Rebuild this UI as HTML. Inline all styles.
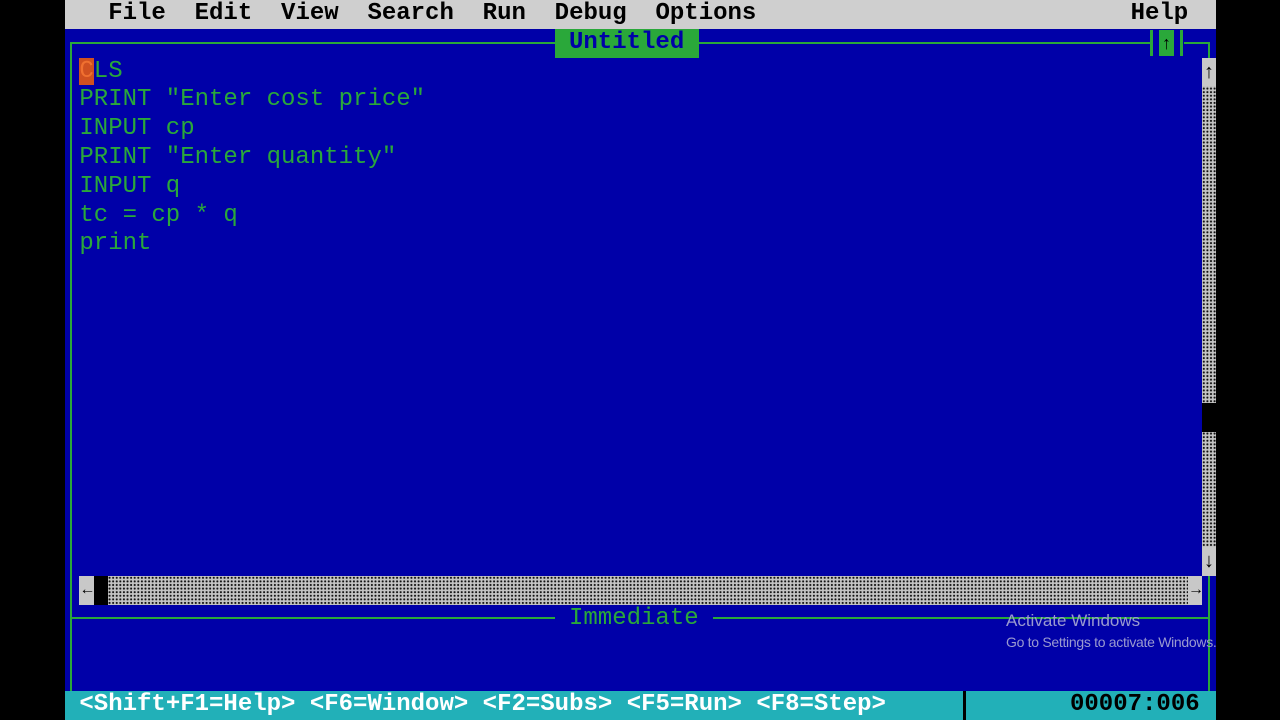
<!DOCTYPE html>
<html><head><meta charset="utf-8"><style>
*{margin:0;padding:0;box-sizing:border-box}
html,body{width:1280px;height:720px;overflow:hidden;background:#000}
.s{position:absolute;left:65px;top:0;width:1151px;height:720px;background:#0000a8;overflow:hidden}
.t{position:absolute;font-family:"Liberation Mono",monospace;font-size:24px;line-height:28.8px;white-space:pre;height:28.8px}
.g{color:#2aa83a}
.dot{background-color:#c4c4c4;background-image:radial-gradient(circle,#111 0.9px,transparent 1.2px);background-size:3.6px 3.6px}
.lg{background:#c8c8c8;color:#000;text-align:center}
</style></head><body>
<div class="s">
 <div style="position:absolute;left:0;top:0;width:1151px;height:28.8px;background:#cfcfcf"></div>
 <div class="t" style="left:0;top:0;color:#000;font-weight:bold">   File  Edit  View  Search  Run  Debug  Options</div>
 <div class="t" style="left:1065.6px;top:0;color:#000;font-weight:bold">Help</div>
 <!-- frame -->
 <div style="position:absolute;left:5px;top:42px;width:1140px;height:2px;background:#2aa83a"></div>
 <div style="position:absolute;left:5px;top:42px;width:2px;height:650px;background:#2aa83a"></div>
 <div style="position:absolute;left:1143px;top:42px;width:2px;height:650px;background:#2aa83a"></div>
 <div style="position:absolute;left:7px;top:617px;width:1136px;height:2px;background:#2aa83a"></div>
 <!-- title -->
 <div class="t" style="left:489.6px;top:28.8px;background:#2aa83a;color:#0000a8;font-weight:bold"> Untitled </div>
 <!-- up box -->
 <div style="position:absolute;left:1085px;top:30px;width:34px;height:28px;background:#0000a8"></div>
 <div style="position:absolute;left:1085px;top:30px;width:3px;height:26px;background:#2aa83a"></div>
 <div style="position:absolute;left:1094px;top:30px;width:15px;height:26px;background:#2aa83a;color:#000;font:bold 18px 'Liberation Sans';text-align:center;line-height:26px">↑</div>
 <div style="position:absolute;left:1115px;top:30px;width:3px;height:26px;background:#2aa83a"></div>
 <!-- code -->
 <div class="t g" style="left:14.4px;top:57.6px"><span style="background:#d05020;color:#f07030">C</span>LS
PRINT "Enter cost price"
INPUT cp
PRINT "Enter quantity"
INPUT q
tc = cp * q
print</div>
 <!-- vertical scrollbar -->
 <div class="dot" style="position:absolute;left:1137px;top:57.6px;width:14px;height:518px"></div>
 <div class="lg" style="position:absolute;left:1137px;top:57.6px;width:14px;height:28.8px;font:bold 20px 'Liberation Sans';line-height:28px">↑</div>
 <div style="position:absolute;left:1137px;top:403px;width:14px;height:29px;background:#000"></div>
 <div class="lg" style="position:absolute;left:1137px;top:547px;width:14px;height:28.8px;font:bold 20px 'Liberation Sans';line-height:28px">↓</div>
 <!-- horizontal scrollbar -->
 <div class="dot" style="position:absolute;left:14.4px;top:576px;width:1123px;height:28.8px"></div>
 <div class="lg" style="position:absolute;left:14.4px;top:576px;width:15px;height:28.8px;font:bold 16px 'Liberation Sans';line-height:28px">←</div>
 <div style="position:absolute;left:29px;top:576px;width:14px;height:28.8px;background:#000"></div>
 <div class="lg" style="position:absolute;left:1123px;top:576px;width:14px;height:28.8px;font:bold 16px 'Liberation Sans';line-height:28px">→</div>
 <!-- immediate -->
 <div class="t g" style="left:489.6px;top:604.8px;background:#0000a8"> Immediate </div>
 <!-- status -->
 <div style="position:absolute;left:0;top:691px;width:1151px;height:29px;background:#22b0b8"></div>
 <div style="position:absolute;left:898px;top:691px;width:3px;height:29px;background:#000"></div>
 <div class="t" style="left:0;top:691px;color:#fff;font-weight:bold"> &lt;Shift+F1=Help&gt; &lt;F6=Window&gt; &lt;F2=Subs&gt; &lt;F5=Run&gt; &lt;F8=Step&gt;</div>
 <div class="t" style="left:1005px;top:691px;color:#000;font-weight:bold">00007:006</div>
</div>
<div style="position:absolute;left:1006px;top:611px;font:17px 'Liberation Sans',sans-serif;color:#9a9ad0;white-space:nowrap">Activate Windows</div>
<div style="position:absolute;left:1006px;top:634px;font:14px 'Liberation Sans',sans-serif;color:#9a9ad0;white-space:nowrap;letter-spacing:-0.3px">Go to Settings to activate Windows.</div>
</body></html>
